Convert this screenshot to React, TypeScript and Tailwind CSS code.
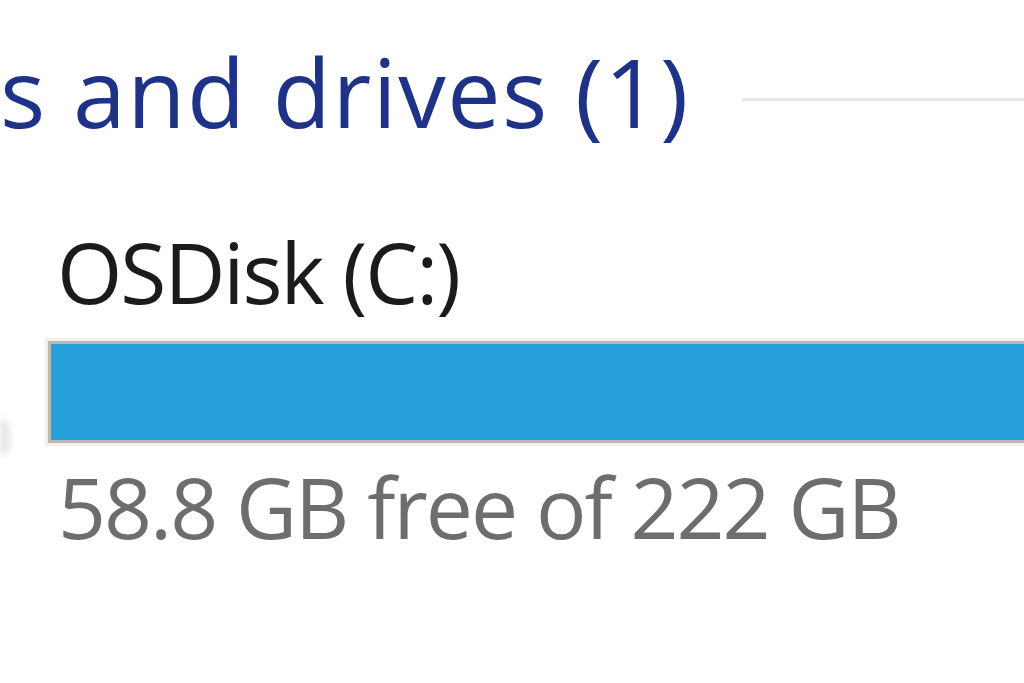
import React from 'react';

const drive = {
  name: 'OSDisk (C:)',
  free: '58.8 GB free of 222 GB',
};

export default function App() {
  return (
    <div
      className="w-[1024px] h-[683px] overflow-hidden bg-white relative"
      style={{ fontFamily: '"Open Sans", "Noto Sans", sans-serif' }}
    >
      {/* group header */}
      <div className="flex items-start pt-[44px]">
        <h2 className="relative shrink-0 text-[95px] leading-none text-[#1e3287] font-normal whitespace-nowrap tracking-[1.5px]">
          <span className="absolute right-full top-0">Device</span>
          s and drives (1)
        </h2>
        <div className="flex-1 ml-[52px] mt-[54px] h-[3px] bg-[#e6e6e6]" />
      </div>

      {/* drive tile */}
      <div className="flex mt-[91px]">
        <div className="w-[48px] shrink-0 flex items-start pt-[188px]">
          <div className="w-[10px] h-[38px] rounded-r-full bg-[#e8e8e8] blur-[3px]" />
        </div>
        <div className="flex-1 min-w-0">
          <div className="pl-[9px] text-[84px] leading-none text-[#1b1b1b] tracking-[-2px] whitespace-nowrap">
            {drive.name}
          </div>
          <div className="mt-[27px] h-[102px] w-[1100px] border-[3px] border-r-0 border-[#bdb9b6] bg-[#26a0da] shadow-[0_0_0_3px_#f1eeeb]" />
          <div className="mt-[22px] pl-[10px] text-[84px] leading-none text-[#6d6d6d] tracking-[-2px] whitespace-nowrap">
            {drive.free}
          </div>
        </div>
      </div>
    </div>
  );
}
